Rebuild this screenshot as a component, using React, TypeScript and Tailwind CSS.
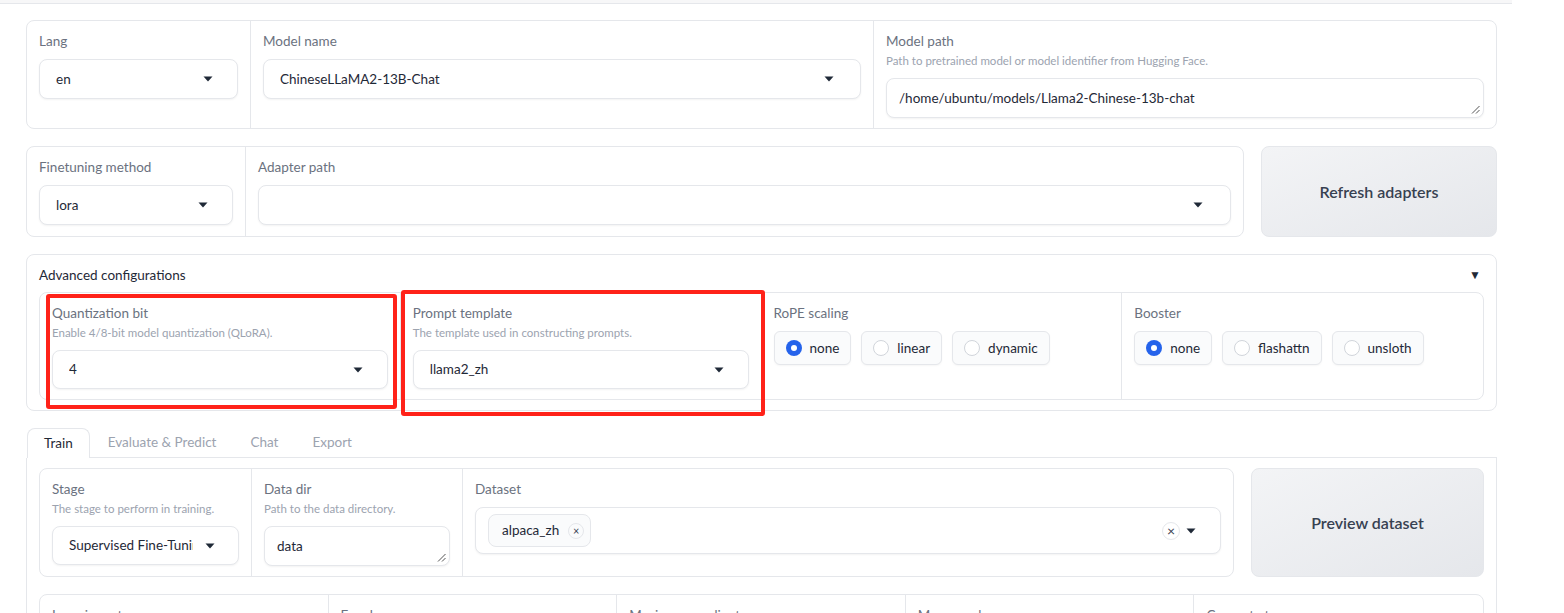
import React from "react";

const Caret = () => (
    <svg width="10" height="6" viewBox="0 0 10 6" className="shrink-0">
        <path d="M0.5 0.5 L9.5 0.5 L5 5.5 Z" fill="#1f2937" />
    </svg>
);

const ResizeGrip = () => (
    <svg width="9" height="9" viewBox="0 0 9 9" className="absolute right-[3px] bottom-[3px]">
        <path d="M8.5 1 L1 8.5 M8.5 5 L5 8.5" stroke="#555" strokeWidth="1" />
    </svg>
);

function Label({ text, info }: { text: string; info?: string }) {
    return (
        <div className="mb-2">
            <div className="text-[13.5px] leading-5 text-[#6b7280] whitespace-nowrap">{text}</div>
            {info && <div className="text-[11.5px] leading-[19px] text-[#9ca3af] whitespace-nowrap">{info}</div>}
        </div>
    );
}

function Select({ value, className = "" }: { value: string; className?: string }) {
    return (
        <div
            className={
                "h-10 rounded-lg border border-[#e5e7eb] bg-white shadow-[0_1px_2px_rgba(0,0,0,0.05)] flex items-center justify-between gap-3 pl-4 pr-6 text-[13.5px] text-[#1f2937] " +
                className
            }
        >
            <span className="flex-1 overflow-hidden whitespace-nowrap">{value}</span>
            <Caret />
        </div>
    );
}

function TextBox({ value }: { value: string }) {
    return (
        <div className="relative h-10 rounded-lg border border-[#e5e7eb] bg-white shadow-[0_1px_2px_rgba(0,0,0,0.05)] flex items-center px-3 text-[13.5px] text-[#1f2937]">
            {value}
            <ResizeGrip />
        </div>
    );
}

function Radio({ text, checked }: { text: string; checked?: boolean }) {
    return (
        <div className="h-[34px] flex items-center gap-2 px-[11px] rounded-md border border-[#e5e7eb] bg-[#fafbfc] shadow-[0_1px_2px_rgba(0,0,0,0.04)] text-[13.5px] text-[#1f2937]">
            {checked ? (
                <span className="w-4 h-4 rounded-full bg-[#2563eb] flex items-center justify-center">
                    <span className="w-[6px] h-[6px] rounded-full bg-white" />
                </span>
            ) : (
                <span className="w-4 h-4 rounded-full border border-[#d1d5db] bg-white" />
            )}
            <span>{text}</span>
        </div>
    );
}

function BigButton({ text, className = "" }: { text: string; className?: string }) {
    return (
        <div
            className={
                "rounded-lg border border-[#e5e7eb] bg-gradient-to-br from-[#f3f4f6] to-[#e5e7eb] flex items-center justify-center text-[16px] font-semibold text-[#374151] " +
                className
            }
        >
            {text}
        </div>
    );
}

const Col = ({ children, className = "" }: { children: React.ReactNode; className?: string }) => (
    <div className={"pt-[10px] pb-[10px] px-3 " + className}>{children}</div>
);

export default function App() {
    return (
        <div className="h-[613px] overflow-hidden bg-white font-['Lato','Noto_Sans',sans-serif]">
            <div className="h-[4px] w-[1512px] bg-[#f7f7f8] border-b border-[#e5e7eb]" />
            <div className="pt-4 pl-[26px] w-[1497px] flex flex-col gap-[17px]">
                {/* model row */}
                <div className="flex h-[109px] rounded-lg border border-[#e5e7eb] divide-x divide-[#e5e7eb]">
                    <Col className="w-[224px]">
                        <Label text="Lang" />
                        <Select value="en" />
                    </Col>
                    <Col className="w-[623px]">
                        <Label text="Model name" />
                        <Select value="ChineseLLaMA2-13B-Chat" className="pr-[26px]" />
                    </Col>
                    <Col className="flex-1">
                        <Label text="Model path" info="Path to pretrained model or model identifier from Hugging Face." />
                        <TextBox value="/home/ubuntu/models/Llama2-Chinese-13b-chat" />
                    </Col>
                </div>

                {/* adapter row */}
                <div className="flex h-[91px] gap-[17px]">
                    <div className="w-[1218px] flex rounded-lg border border-[#e5e7eb] divide-x divide-[#e5e7eb]">
                        <Col className="w-[219px]">
                            <Label text="Finetuning method" />
                            <Select value="lora" />
                        </Col>
                        <Col className="flex-1">
                            <Label text="Adapter path" />
                            <Select value="" className="pr-[27px]" />
                        </Col>
                    </div>
                    <BigButton text="Refresh adapters" className="flex-1" />
                </div>

                {/* advanced */}
                <div className="relative h-[157px] rounded-lg border border-[#e5e7eb] pt-[10px] px-3">
                    <div className="flex items-center justify-between h-5 mb-[7px]">
                        <span className="text-[13.5px] text-[#1f2937]">Advanced configurations</span>
                        <span className="text-[12px] text-[#1f2937] pr-[3px]">▼</span>
                    </div>
                    <div className="grid grid-cols-4 h-[108px] rounded-lg border border-[#e5e7eb] divide-x divide-[#e5e7eb]">
                        <Col>
                            <Label text="Quantization bit" info="Enable 4/8-bit model quantization (QLoRA)." />
                            <Select value="4" className="h-[39px]" />
                        </Col>
                        <Col>
                            <Label text="Prompt template" info="The template used in constructing prompts." />
                            <Select value="llama2_zh" className="h-[39px]" />
                        </Col>
                        <Col>
                            <Label text="RoPE scaling" />
                            <div className="flex gap-[10px]">
                                <Radio text="none" checked />
                                <Radio text="linear" />
                                <Radio text="dynamic" />
                            </div>
                        </Col>
                        <Col>
                            <Label text="Booster" />
                            <div className="flex gap-[10px]">
                                <Radio text="none" checked />
                                <Radio text="flashattn" />
                                <Radio text="unsloth" />
                            </div>
                        </Col>
                    </div>
                    <div className="absolute left-[19px] top-[39px] w-[351px] h-[115px] border-4 border-[#ff2219] rounded-[3px]" />
                    <div className="absolute left-[374px] top-[35px] w-[364px] h-[126px] border-4 border-[#ff2219] rounded-[3px]" />
                </div>

                {/* tabs */}
                <div>
                    <div className="flex items-end h-[30px] text-[13.5px]">
                        <div className="h-[30px] px-4 flex items-center border border-b-0 border-[#e5e7eb] rounded-t-lg text-[#1f2937] bg-white ml-px">
                            Train
                        </div>
                        <div className="flex-1 h-full flex items-center border-b border-[#e5e7eb] text-[#9ca3af] gap-[34px] pl-[18px]">
                            <span>Evaluate &amp; Predict</span>
                            <span>Chat</span>
                            <span>Export</span>
                        </div>
                    </div>
                    <div className="border border-t-0 border-[#e5e7eb] px-3 pt-[10px] pb-4 flex flex-col gap-[17px]">
                        <div className="flex h-[109px] gap-[17px]">
                            <div className="w-[1195px] flex rounded-lg border border-[#e5e7eb] divide-x divide-[#e5e7eb]">
                                <Col className="w-[212px]">
                                    <Label text="Stage" info="The stage to perform in training." />
                                    <Select value="Supervised Fine-Tuning" className="h-[39px] pr-[23px]" />
                                </Col>
                                <Col className="w-[211px]">
                                    <Label text="Data dir" info="Path to the data directory." />
                                    <TextBox value="data" />
                                </Col>
                                <Col className="flex-1">
                                    <Label text="Dataset" />
                                    <div className="h-[47px] rounded-lg border border-[#e5e7eb] bg-white shadow-[0_1px_2px_rgba(0,0,0,0.05)] flex items-center justify-between pl-3 pr-6">
                                        <div className="h-[33px] flex items-center gap-[9px] pl-[13px] pr-[6px] rounded-lg border border-[#e5e7eb] bg-[#fafbfc] text-[13.5px] text-[#1f2937]">
                                            alpaca_zh
                                            <span className="w-4 h-4 rounded-full border border-[#e5e7eb] flex items-center justify-center text-[11px] text-[#374151] leading-none">
                                                ×
                                            </span>
                                        </div>
                                        <div className="flex items-center gap-[6px]">
                                            <span className="w-[18px] h-[18px] rounded-full border border-[#e5e7eb] flex items-center justify-center text-[14px] text-[#374151] leading-none">
                                                ×
                                            </span>
                                            <Caret />
                                        </div>
                                    </div>
                                </Col>
                            </div>
                            <BigButton text="Preview dataset" className="flex-1" />
                        </div>
                        <div className="grid grid-cols-5 rounded-lg border border-[#e5e7eb] divide-x divide-[#e5e7eb] h-[100px]">
                            {["Learning rate", "Epochs", "Maximum gradient norm", "Max samples", "Compute type"].map((t) => (
                                <Col key={t}>
                                    <Label text={t} />
                                </Col>
                            ))}
                        </div>
                    </div>
                </div>
            </div>
        </div>
    );
}
